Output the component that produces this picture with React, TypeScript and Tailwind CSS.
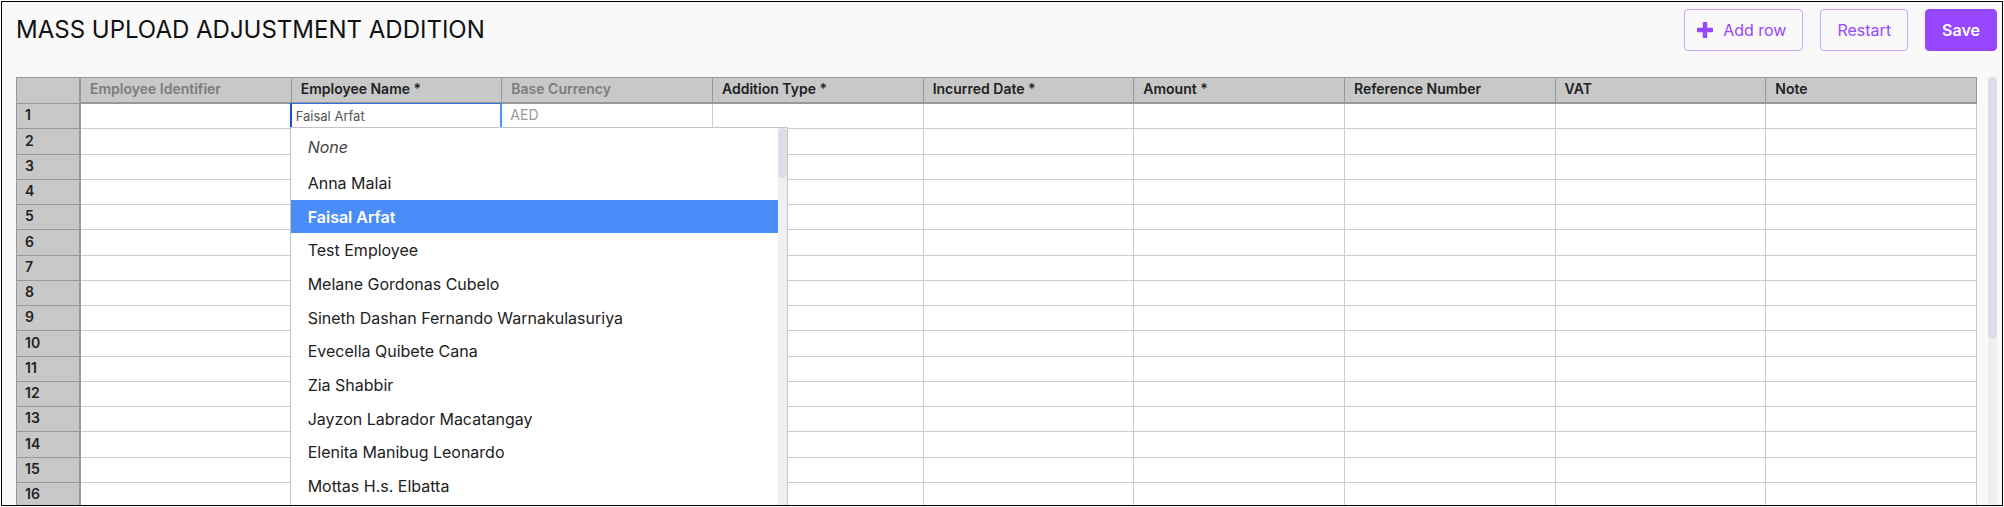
import React, { useState } from "react";

const columns = [
  { label: "Employee Identifier", readOnly: true },
  { label: "Employee Name *" },
  { label: "Base Currency", readOnly: true },
  { label: "Addition Type *" },
  { label: "Incurred Date *" },
  { label: "Amount *" },
  { label: "Reference Number" },
  { label: "VAT" },
  { label: "Note" },
];

const employees = [
  "Anna Malai",
  "Faisal Arfat",
  "Test Employee",
  "Melane Gordonas Cubelo",
  "Sineth Dashan Fernando Warnakulasuriya",
  "Evecella Quibete Cana",
  "Zia Shabbir",
  "Jayzon Labrador Macatangay",
  "Elenita Manibug Leonardo",
  "Mottas H.s. Elbatta",
];

const rows = Array.from({ length: 16 }, (_, i) => i + 1);

const EmployeeEditor = () => {
  const [value, setValue] = useState("Faisal Arfat");

  return (
    <div className="absolute -top-px -right-px -left-0.5 z-10">
      <input
        type="text"
        aria-label="Employee Name"
        value={value}
        onChange={(e) => setValue(e.target.value)}
        className="block h-6 w-full border-x-2 border-t border-r-[#5292f7] border-l-[#1d4fc4] border-t-[#2f6fe0] bg-white px-1 text-[13px] text-[#555] shadow-md outline-none"
      />
      <div className="relative flex w-[498px] border border-[#c4c4c4] bg-white">
        <ul role="listbox" aria-label="Employees" className="flex-1 pb-4">
          <li
            role="option"
            aria-selected={false}
            className="flex h-[38px] items-center px-[17px] text-base text-[#444] italic"
          >
            None
          </li>
          {employees.map((name) => (
            <li
              key={name}
              role="option"
              aria-selected={name === value}
              onClick={() => setValue(name)}
              className={`flex h-[34px] cursor-pointer items-center px-[17px] text-base [&:nth-child(3n+3)]:h-[33px] ${
                name === value ? "bg-[#4a8df8] font-semibold text-white" : "text-[#222]"
              }`}
            >
              {name}
            </li>
          ))}
        </ul>
        <div className="w-[9px] bg-[#eff0f2]">
          <div className="h-[50px] rounded-full bg-[#dbdee6]" />
        </div>
      </div>
    </div>
  );
};

const App = () => {
  return (
    <div className="h-screen bg-white p-px font-['Inter',sans-serif]">
      <div className="flex h-full flex-col overflow-hidden border border-black bg-[#f9f9f9]">
        {/* Title bar */}
        <header className="flex items-center justify-between pt-[7px] pr-[5px] pb-[26px] pl-[14px]">
          <h1 className="text-2xl text-[#111]">MASS UPLOAD ADJUSTMENT ADDITION</h1>
          <div className="flex gap-[17px]">
            <button className="flex h-[42px] items-center gap-[10px] rounded border border-[#cda6ff] pr-4 pl-3 text-base text-[#9747ff]">
              <svg className="h-4 w-4" viewBox="0 0 16 16" fill="currentColor">
                <path d="M6.6 0h2.8a.8.8 0 0 1 .8.8v5h5a.8.8 0 0 1 .8.8v2.8a.8.8 0 0 1-.8.8h-5v5a.8.8 0 0 1-.8.8H6.6a.8.8 0 0 1-.8-.8v-5h-5a.8.8 0 0 1-.8-.8V6.6a.8.8 0 0 1 .8-.8h5v-5a.8.8 0 0 1 .8-.8z" />
              </svg>
              Add row
            </button>
            <button className="h-[42px] rounded border border-[#cda6ff] px-4 text-base text-[#9747ff]">
              Restart
            </button>
            <button className="h-[42px] rounded border border-[#9747ff] bg-[#9747ff] px-4 text-base font-semibold text-white">
              Save
            </button>
          </div>
        </header>

        {/* Sheet */}
        <div className="flex min-h-0 flex-1 gap-[11px] pr-[5px] pl-[14px]">
          <div className="flex-1">
            <table className="w-full table-fixed border-separate border-spacing-0 border-t border-l border-[#999] text-sm">
              <thead>
                <tr className="h-[26px]">
                  <th className="w-16 border-r-2 border-b border-[#999] bg-[#c8c8c8]" />
                  {columns.map((col) => (
                    <th
                      key={col.label}
                      className={`border-r border-b-2 border-[#999] bg-[#c8c8c8] p-0 pb-0.5 pl-[9px] text-left leading-5 font-semibold ${
                        col.readOnly ? "text-[#7c7c7c]" : "text-[#222]"
                      }`}
                    >
                      {col.label}
                    </th>
                  ))}
                </tr>
              </thead>
              <tbody>
                {rows.map((row) => (
                  <tr key={row} className="h-[25px] [&:nth-child(4n+2)]:h-[26px]">
                    <th className="border-r-2 border-b border-[#999] bg-[#c8c8c8] p-0 pb-0.5 pl-2 text-left leading-5 font-semibold text-[#222]">
                      {row}
                    </th>
                    {columns.map((col) => (
                      <td
                        key={col.label}
                        className="relative border-r border-b border-[#ccc] bg-white p-0 pb-0.5 pl-2 leading-5 text-[#999]"
                      >
                        {row === 1 && col.label === "Base Currency" && "AED"}
                        {row === 1 && col.label === "Employee Name *" && <EmployeeEditor />}
                      </td>
                    ))}
                  </tr>
                ))}
              </tbody>
            </table>
          </div>
          <div className="w-[9px] bg-[#eeeff1]">
            <div className="h-[262px] rounded-full bg-[#dbdee6]" />
          </div>
        </div>
      </div>
    </div>
  );
};

export default App;
